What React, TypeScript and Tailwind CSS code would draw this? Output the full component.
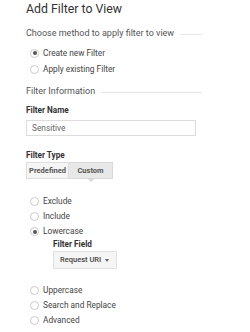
import React from 'react';

const Radio: React.FC<{ checked?: boolean }> = ({ checked }) => (
  <span className="flex h-[9px] w-[9px] shrink-0 items-center justify-center rounded-full border border-[#cacaca] bg-white">
    {checked && <span className="h-[4px] w-[4px] rounded-full bg-[#555]" />}
  </span>
);

const RadioRow: React.FC<{ label: string; checked?: boolean; h: string }> = ({ label, checked, h }) => (
  <div className={`flex items-center gap-[4px] pl-[4px] ${h}`}>
    <Radio checked={checked} />
    <span className="text-[8.3px] text-[#444]">{label}</span>
  </div>
);

const SectionHeader: React.FC<{ title: string }> = ({ title }) => (
  <div className="flex h-[12px] w-[176px] items-center">
    <span className="whitespace-nowrap text-[9px] text-[#555]">{title}</span>
    <span className="ml-[6px] h-px flex-1 bg-[#e6e6e6]" />
  </div>
);

export default function App() {
  return (
    <div className="h-[332px] w-[250px] bg-white pl-[26px] font-['Roboto',sans-serif]">
      <h1 className="h-[19px] text-[12.3px] leading-[19px] text-[#333]">Add Filter to View</h1>

      <div className="mt-[9px]">
        <SectionHeader title="Choose method to apply filter to view" />
      </div>
      <div className="mt-[5px]">
        <RadioRow label="Create new Filter" checked h="h-[16px]" />
        <RadioRow label="Apply existing Filter" h="h-[16px]" />
      </div>

      <div className="mt-[9px]">
        <SectionHeader title="Filter Information" />
      </div>

      <div className="mt-[6px] h-[12px] text-[8.2px] font-bold leading-[12px] text-[#333]">Filter Name</div>
      <div className="mt-[4px] flex h-[16px] w-[170px] items-center border border-[#dcdcdc] pl-[5px] text-[8.3px] text-[#666]">
        Sensitive
      </div>

      <div className="mt-[13px] h-[12px] text-[8.2px] font-bold leading-[12px] text-[#333]">Filter Type</div>
      <div className="mt-[1px] flex h-[17px]">
        <div className="flex w-[43px] items-center justify-center border border-[#dedede] bg-[#f5f5f5] text-[7.5px] font-bold text-[#555]">
          Predefined
        </div>
        <div className="relative flex w-[44px] items-center justify-center border border-l-0 border-[#d8d8d8] bg-[#e8e8e8] text-[7.5px] font-bold text-[#555]">
          Custom
          <span className="absolute left-1/2 top-full -translate-x-1/2 border-x-[4px] border-t-[4px] border-x-transparent border-t-[#d8d8d8]" />
        </div>
      </div>

      <div className="mt-[15px]">
        <RadioRow label="Exclude" h="h-[15px]" />
        <RadioRow label="Include" h="h-[15px]" />
        <RadioRow label="Lowercase" checked h="h-[15px]" />
      </div>

      <div className="ml-[27px]">
        <div className="h-[11px] text-[8.2px] font-bold leading-[11px] text-[#333]">Filter Field</div>
        <div className="mt-[1px] flex h-[18px] w-[64px] items-center justify-between border border-[#e0e0e0] bg-[#f5f5f5] pl-[6px] pr-[7px] text-[7.5px] font-medium text-[#444]">
          <span>Request URI</span>
          <span className="border-x-[2.5px] border-t-[3px] border-x-transparent border-t-[#666]" />
        </div>
      </div>

      <div className="mt-[14px]">
        <RadioRow label="Uppercase" h="h-[15px]" />
        <RadioRow label="Search and Replace" h="h-[15px]" />
        <RadioRow label="Advanced" h="h-[15px]" />
      </div>
    </div>
  );
}
